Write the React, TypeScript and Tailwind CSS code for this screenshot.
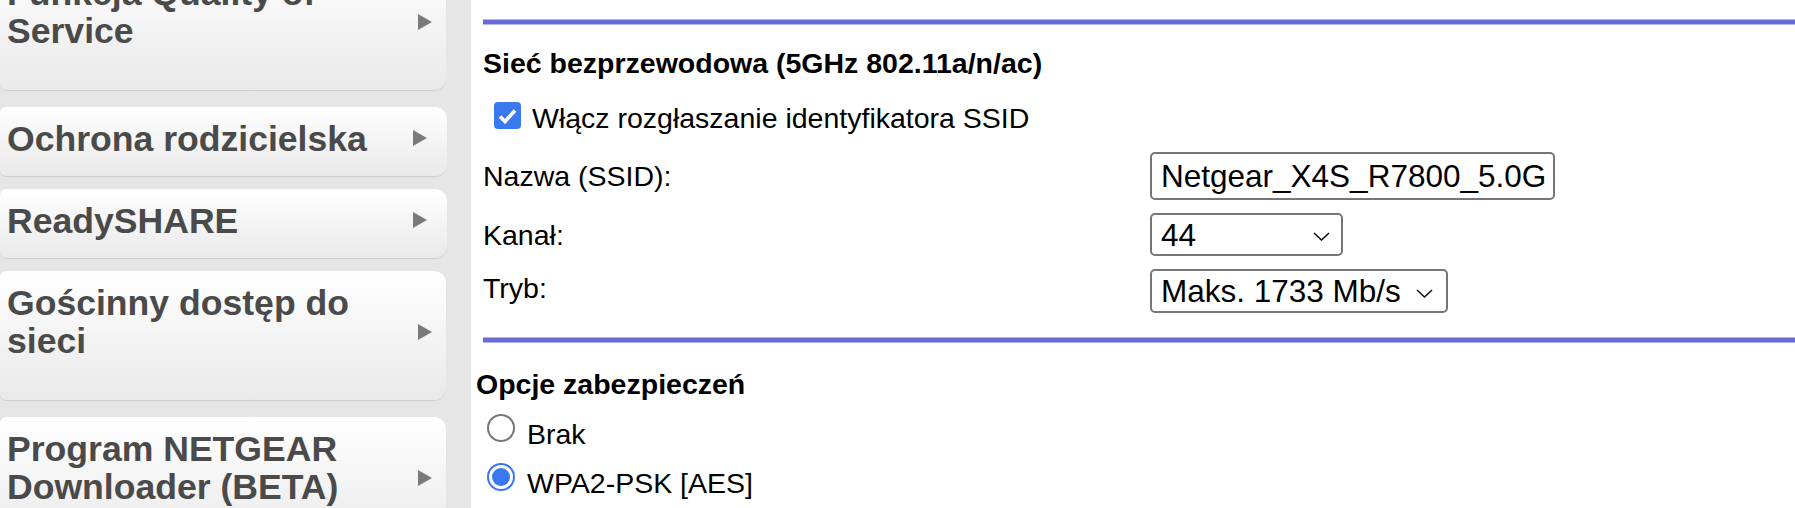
import React from "react";

type CardProps = {
  lines: string[];
  cardClass: string;
  arrowClass: string;
};

function Arrow() {
  return (
    <svg width="14" height="16" viewBox="0 0 14 16" aria-hidden="true">
      <polygon points="0,0 14,8 0,16" fill="#7a7a7a" />
    </svg>
  );
}

function Card({ lines, cardClass, arrowClass }: CardProps) {
  return (
    <div className={cardClass}>
      <div className="pt-[14px] text-[35.6px] font-bold leading-[37.5px] text-[#4a4a4a] whitespace-nowrap">
        {lines.map((l, i) => (
          <div key={i}>{l}</div>
        ))}
      </div>
      <div className={arrowClass}>
        <Arrow />
      </div>
    </div>
  );
}

function Chevron() {
  return (
    <svg width="17" height="9" viewBox="0 0 17 9" aria-hidden="true" className="mt-[4px]">
      <polyline points="1,1 8.5,8 16,1" fill="none" stroke="#111" strokeWidth="1.6" />
    </svg>
  );
}

function PurpleLine({ className }: { className: string }) {
  return <div className={className} />;
}

export default function App() {
  return (
    <div className="flex w-[1795px] h-[508px] overflow-hidden bg-white font-['Liberation_Sans','Arial',sans-serif]">
      <aside className="w-[471px] shrink-0 h-full bg-[#e6e6e6] overflow-hidden">
        <div className="flex flex-col mt-[-39px]">
          <Card
            lines={["Funkcja Quality of", "Service"]}
            cardClass="flex justify-between w-[446px] h-[129px] pl-[7px] rounded-r-[12px] rounded-l-[6px] bg-linear-to-b from-white to-[#e9e9e9] shadow-[0_1px_1px_rgba(0,0,0,0.10)]"
            arrowClass="self-center mb-[7px] mr-[14px]"
          />
          <Card
            lines={["Ochrona rodzicielska"]}
            cardClass="flex justify-between w-[447px] h-[69px] mt-[17px] pl-[7px] rounded-r-[12px] rounded-l-[6px] bg-linear-to-b from-white to-[#e9e9e9] shadow-[0_1px_1px_rgba(0,0,0,0.10)]"
            arrowClass="self-center mb-[7px] mr-[20px]"
          />
          <Card
            lines={["ReadySHARE"]}
            cardClass="flex justify-between w-[447px] h-[69px] mt-[13px] pl-[7px] rounded-r-[12px] rounded-l-[6px] bg-linear-to-b from-white to-[#e9e9e9] shadow-[0_1px_1px_rgba(0,0,0,0.10)]"
            arrowClass="self-center mb-[7px] mr-[20px]"
          />
          <Card
            lines={["Gościnny dostęp do", "sieci"]}
            cardClass="flex justify-between w-[446px] h-[129px] mt-[13px] pl-[7px] rounded-r-[12px] rounded-l-[6px] bg-linear-to-b from-white to-[#e9e9e9] shadow-[0_1px_1px_rgba(0,0,0,0.10)]"
            arrowClass="self-center mb-[7px] mr-[14px]"
          />
          <Card
            lines={["Program NETGEAR", "Downloader (BETA)"]}
            cardClass="flex justify-between w-[446px] h-[129px] mt-[17px] pl-[7px] rounded-r-[12px] rounded-l-[6px] bg-linear-to-b from-white to-[#e9e9e9] shadow-[0_1px_1px_rgba(0,0,0,0.10)]"
            arrowClass="self-center mb-[7px] mr-[14px]"
          />
        </div>
      </aside>

      <main className="flex-1 min-w-0 pl-[12px] text-black">
        <PurpleLine className="mt-[19px] h-[6px] bg-[#6a6ad8] border-y border-[#b3b3ee]" />

        <h2 className="mt-[22px] text-[28.5px] leading-[32px] font-bold whitespace-nowrap">
          Sieć bezprzewodowa (5GHz 802.11a/n/ac)
        </h2>

        <label className="mt-[23px] flex items-start h-[32px]">
          <span className="ml-[11px] w-[27px] h-[27px] rounded-[4px] bg-[#3a78f0] flex items-center justify-center">
            <svg width="19" height="16" viewBox="0 0 19 16" aria-hidden="true">
              <polyline points="2,8.5 7,13.5 17,2.5" fill="none" stroke="#fff" strokeWidth="3.6" strokeLinejoin="miter" />
            </svg>
          </span>
          <span className="ml-[11px] text-[28.5px] leading-[32px] whitespace-nowrap">
            Włącz rozgłaszanie identyfikatora SSID
          </span>
        </label>

        <div className="mt-[18px] grid grid-cols-[667px_auto] gap-y-[13px] items-center">
          <div className="text-[28.5px] leading-[32px]">Nazwa (SSID):</div>
          <div className="w-[405px] h-[48px] border-2 border-[#767676] rounded-[5px] pl-[9px] flex items-center text-[31.5px] leading-[36px] whitespace-nowrap overflow-hidden">
            Netgear_X4S_R7800_5.0G
          </div>

          <div className="text-[28.5px] leading-[32px]">Kanał:</div>
          <div className="w-[193px] h-[43px] border-2 border-[#767676] rounded-[5px] pl-[9px] pr-[11px] flex items-center justify-between text-[31.5px] leading-[36px]">
            <span>44</span>
            <Chevron />
          </div>

          <div className="text-[28.5px] leading-[32px] mb-[6px]">Tryb:</div>
          <div className="w-[298px] h-[44px] border-2 border-[#767676] rounded-[5px] pl-[9px] pr-[13px] flex items-center justify-between text-[31.5px] leading-[36px] whitespace-nowrap">
            <span>Maks. 1733 Mb/s</span>
            <Chevron />
          </div>
        </div>

        <PurpleLine className="mt-[24px] h-[6px] bg-[#6a6ad8] border-y border-[#b3b3ee]" />

        <h3 className="mt-[25px] ml-[-7px] text-[28.5px] leading-[32px] font-bold whitespace-nowrap">
          Opcje zabezpieczeń
        </h3>

        <div className="mt-[14px] flex flex-col gap-[13px]">
          <label className="flex items-start h-[36px] ml-[4px]">
            <span className="w-[28px] h-[28px] rounded-full border-2 border-[#767676] bg-white" />
            <span className="ml-[12px] mt-[4px] text-[28.5px] leading-[32px]">Brak</span>
          </label>
          <label className="flex items-start h-[36px] ml-[4px]">
            <span className="w-[28px] h-[28px] rounded-full border-2 border-[#3a78f0] bg-white p-[3px]">
              <span className="block w-full h-full rounded-full bg-[#3a78f0]" />
            </span>
            <span className="ml-[12px] mt-[4px] text-[28.5px] leading-[32px] whitespace-nowrap">WPA2-PSK [AES]</span>
          </label>
        </div>
      </main>
    </div>
  );
}
